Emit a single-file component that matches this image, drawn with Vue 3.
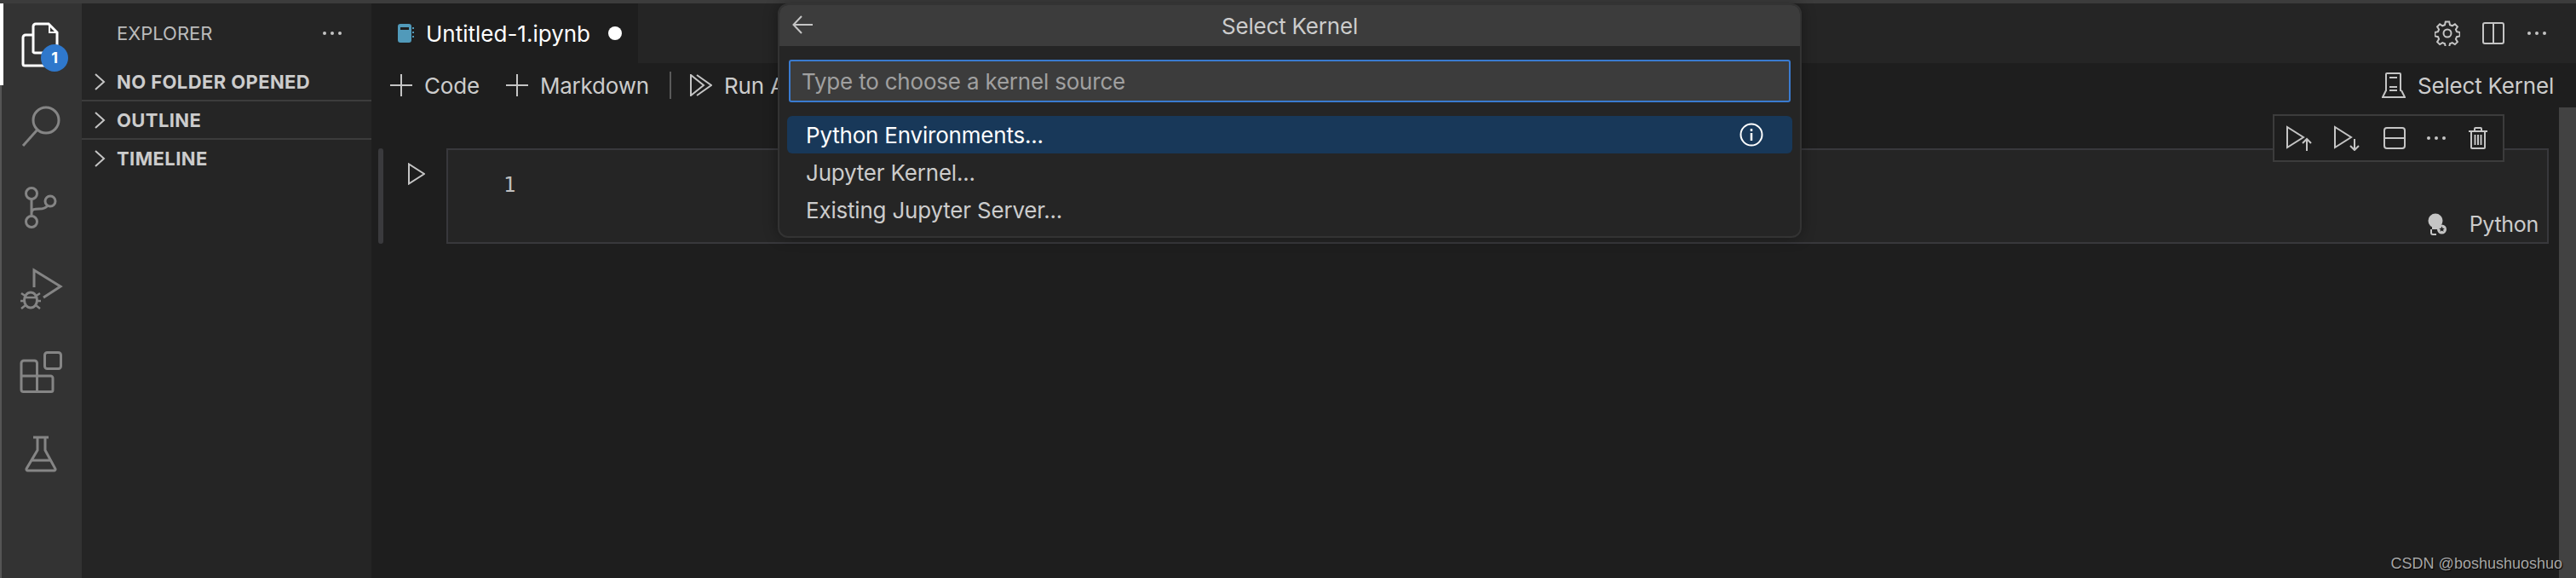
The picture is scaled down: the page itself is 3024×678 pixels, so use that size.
<script setup>
const sections = ['NO FOLDER OPENED', 'OUTLINE', 'TIMELINE']
const kernelSources = ['Python Environments...', 'Jupyter Kernel...', 'Existing Jupyter Server...']
</script>

<template>
  <div class="window">
    <div class="title-strip"></div>
    <div class="main">
      <!-- activity bar -->
      <nav class="activity">
        <div class="activity-item active">
          <svg width="96" height="96" viewBox="0 0 96 96" fill="none" stroke="#fff" stroke-width="3">
            <path d="M39 57V27a3 3 0 0 1 3-3h15l10 10v21a3 3 0 0 1-3 3H42a3 3 0 0 1-3-1Z" />
            <path d="M58 24v10h9" stroke-width="2" />
            <path d="M39 37H30a3 3 0 0 0-3 3v31a2 2 0 0 0 2 2h24" />
          </svg>
          <span class="badge">1</span>
        </div>
        <div class="activity-item">
          <svg width="96" height="96" viewBox="0 0 96 96" fill="none" stroke="#858585" stroke-width="3">
            <circle cx="54" cy="41" r="15" />
            <path d="M44 52 27 71" />
          </svg>
        </div>
        <div class="activity-item">
          <svg width="96" height="96" viewBox="0 0 96 96" fill="none" stroke="#858585" stroke-width="3">
            <circle cx="37" cy="31" r="6.500" />
            <circle cx="37" cy="64" r="6.500" />
            <circle cx="59" cy="40" r="6" />
            <path d="M37 38v19M37 54c0-5 4-5 9-5 5 0 8-1 10-4" />
          </svg>
        </div>
        <div class="activity-item">
          <svg width="96" height="96" viewBox="0 0 96 96" fill="none" stroke="#858585" stroke-width="3">
            <path d="M40 45V25l31 19-20 13" />
            <ellipse cx="36" cy="60" rx="7.500" ry="9" />
            <path d="M29 57h14M25 52l6 4M47 52l-6 4M24 61h5M43 61h5M25 70l5-4M47 70l-5-4" stroke-width="2.500" />
          </svg>
        </div>
        <div class="activity-item">
          <svg width="96" height="96" viewBox="0 0 96 96" fill="none" stroke="#858585" stroke-width="3">
            <rect x="52.500" y="25.500" width="19" height="19" rx="3" />
            <path d="M43.500 53V38a3 3 0 0 0-3-3H28a3 3 0 0 0-3 3v31a2.500 2.500 0 0 0 2.500 2.500H60a2 2 0 0 0 2-2V55.500a2.500 2.500 0 0 0-2.500-2.500H25M43.500 53v18" />
          </svg>
        </div>
        <div class="activity-item">
          <svg width="96" height="96" viewBox="0 0 96 96" fill="none" stroke="#858585" stroke-width="3">
            <path d="M39 29h18M44 29v15L31 66a1.500 1.500 0 0 0 1.500 2h31a1.500 1.500 0 0 0 1.500-2L53 44V29M36 56h24" />
          </svg>
        </div>
      </nav>

      <!-- explorer -->
      <aside class="sidebar">
        <div class="sidebar-head">
          <span>EXPLORER</span>
          <svg class="dots" width="24" height="6" viewBox="0 0 24 6" fill="#c5c5c5">
            <circle cx="3" cy="3" r="2" /><circle cx="12" cy="3" r="2" /><circle cx="21" cy="3" r="2" />
          </svg>
        </div>
        <div v-for="name in sections" :key="name" class="section">
          <svg width="14" height="20" viewBox="0 0 14 20" fill="none" stroke="#c5c5c5" stroke-width="2">
            <path d="M2 1l10 9-10 9" />
          </svg>
          <span>{{ name }}</span>
        </div>
      </aside>

      <!-- editor -->
      <section class="editor">
        <div class="tabs">
          <div class="tab">
            <svg width="20" height="24" viewBox="0 0 20 24">
              <rect x="1" y="1" width="16" height="22" rx="3" fill="#519aba" />
              <rect x="4" y="5" width="10" height="3" fill="#1e1e1e" />
              <path d="M18 5h2v2h-2zM18 10h2v2h-2zM18 15h2v2h-2z" fill="#519aba" />
            </svg>
            <span class="tab-name">Untitled-1.ipynb</span>
            <i class="dirty"></i>
          </div>
          <div class="tab-actions">
            <svg width="30" height="30" viewBox="0 0 30 30" fill="none" stroke="#c5c5c5" stroke-width="2">
              <circle cx="15" cy="15" r="4.500" />
              <path d="M12.800 1.500h4.400l.8 3.700 2.700 1.100 3.200-2 3 3-2 3.200 1.100 2.700 3.700.8v4.400l-3.700.8-1.100 2.700 2 3.200-3 3-3.200-2-2.700 1.100-.8 3.700h-4.400l-.8-3.700-2.700-1.100-3.200 2-3-3 2-3.200-1.100-2.700-3.700-.8v-4.400l3.700-.8 1.100-2.700-2-3.200 3-3 3.200 2 2.700-1.100Z" />
            </svg>
            <svg width="26" height="26" viewBox="0 0 26 26" fill="none" stroke="#c5c5c5" stroke-width="2">
              <rect x="1" y="1" width="24" height="24" rx="2" />
              <path d="M13 1v24" />
            </svg>
            <svg width="24" height="6" viewBox="0 0 24 6" fill="#c5c5c5">
              <circle cx="3" cy="3" r="2" /><circle cx="12" cy="3" r="2" /><circle cx="21" cy="3" r="2" />
            </svg>
          </div>
        </div>

        <div class="toolbar">
          <button class="tool">
            <svg width="26" height="26" viewBox="0 0 26 26" stroke="#c5c5c5" stroke-width="2"><path d="M0 13h26M13 0v26" /></svg>
            <span>Code</span>
          </button>
          <button class="tool">
            <svg width="26" height="26" viewBox="0 0 26 26" stroke="#c5c5c5" stroke-width="2"><path d="M0 13h26M13 0v26" /></svg>
            <span>Markdown</span>
          </button>
          <i class="tool-sep"></i>
          <button class="tool">
            <svg width="26" height="26" viewBox="0 0 26 26" fill="none" stroke="#c5c5c5" stroke-width="2">
              <path d="M1 1v24l15-12Z" /><path d="M8 1l17 12-17 12" />
            </svg>
            <span>Run All</span>
          </button>
          <button class="tool kernel">
            <svg width="28" height="30" viewBox="0 0 28 30" fill="none" stroke="#c5c5c5" stroke-width="2">
              <path d="M5 22V2a1 1 0 0 1 1-1h15a1 1 0 0 1 1 1v20M9 6h9M9 17h9M9 21h9M5 21 1 29h26l-4-8" />
            </svg>
            <span>Select Kernel</span>
          </button>
        </div>

        <div class="cell-row">
          <i class="focus-bar"></i>
          <svg class="cell-run" width="20" height="26" viewBox="0 0 20 26" fill="none" stroke="#c5c5c5" stroke-width="2">
            <path d="M1 1.500v23L19 13Z" />
          </svg>
          <div class="cell">
            <span class="line-no">1</span>
            <div class="lang">
              <svg width="24" height="26" viewBox="0 0 24 26">
                <circle cx="9" cy="9" r="8.500" fill="#c5c5c5" />
                <path d="M5 15h8v4H5z" fill="#c5c5c5" />
                <path d="M4 19v4a2 2 0 0 0 2 2h4" fill="none" stroke="#c5c5c5" stroke-width="2" />
                <circle cx="16.500" cy="19" r="5.500" fill="#c5c5c5" />
                <path d="m16.500 15.500 1 2.300 2.300.2-1.800 1.500.6 2.300-2.100-1.300-2.100 1.300.6-2.300-1.800-1.500 2.300-.2Z" fill="#252525" />
              </svg>
              <span>Python</span>
            </div>
          </div>
        </div>
      </section>
      <div class="scrollbar"></div>
    </div>

    <!-- floats over the notebook -->
    <div class="cell-actions">
      <svg width="30" height="30" viewBox="0 0 30 30" fill="none" stroke="#c5c5c5" stroke-width="2">
        <path d="M1 2v24l19-12Z" /><path d="M24 30V17M19 21l5-5 5 5" />
      </svg>
      <svg width="30" height="30" viewBox="0 0 30 30" fill="none" stroke="#c5c5c5" stroke-width="2">
        <path d="M1 2v24l19-12Z" /><path d="M24 16v13M19 24l5 5 5-5" />
      </svg>
      <svg width="30" height="26" viewBox="-2 0 30 26" fill="none" stroke="#c5c5c5" stroke-width="2">
        <rect x="1" y="1" width="24" height="24" rx="3" /><path d="M1 13h24" />
      </svg>
      <svg class="tight" width="24" height="6" viewBox="0 0 24 6" fill="#c5c5c5">
        <circle cx="3" cy="3" r="2" /><circle cx="12" cy="3" r="2" /><circle cx="21" cy="3" r="2" />
      </svg>
      <svg width="22" height="26" viewBox="0 0 22 26" fill="none" stroke="#c5c5c5" stroke-width="2">
        <path d="M0 5h22M7 5V2a1 1 0 0 1 1-1h6a1 1 0 0 1 1 1v3M3 5v19a1 1 0 0 0 1 1h14a1 1 0 0 0 1-1V5M7.500 9v12M11 9v12M14.500 9v12" />
      </svg>
    </div>

    <div class="quick-input">
      <div class="qi-title">
        <svg width="24" height="22" viewBox="0 0 24 22" fill="none" stroke="#c5c5c5" stroke-width="2">
          <path d="M24 11H2M11 1 1.500 11 11 21" />
        </svg>
        <span>Select Kernel</span>
      </div>
      <div class="qi-input">Type to choose a kernel source</div>
      <ul class="qi-list">
        <li v-for="(item, i) in kernelSources" :key="item" :class="{ selected: i === 0 }">
          <span>{{ item }}</span>
          <svg v-if="i === 0" width="28" height="28" viewBox="0 0 28 28" fill="none" stroke="#fff" stroke-width="2">
            <circle cx="14" cy="14" r="12.500" />
            <path d="M14 12v9M14 7v3" stroke-width="2.500" />
          </svg>
        </li>
      </ul>
    </div>

    <div class="watermark">CSDN @boshushuoshuo</div>
  </div>
</template>

<style>
html,
body {
  margin: 0;
  background: #1e1e1e;
}
</style>

<style scoped>
.window {
  position: relative;
  width: 3024px;
  height: 678px;
  overflow: hidden;
  display: flex;
  flex-direction: column;
  background: #1e1e1e;
  font-family: Inter, "Liberation Sans", sans-serif;
  font-size: 26px;
  letter-spacing: -0.2px;
  color: #cccccc;
}

.title-strip {
  height: 4px;
  background: #3c3c3c;
}

.main {
  flex: 1;
  display: flex;
  min-height: 0;
}

.activity {
  width: 96px;
  background: #333333;
  border-left: 2px solid #555555;
  box-sizing: border-box;
  flex: none;
}

.activity-item {
  position: relative;
  width: 96px;
  height: 96px;
  margin-left: -2px;
}

.activity-item svg {
  display: block;
}

.activity-item.active {
  border-left: 4px solid #ffffff;
  box-sizing: border-box;
}

.activity-item.active svg {
  margin-left: -4px;
}

.badge {
  position: absolute;
  left: 44px;
  top: 48px;
  width: 32px;
  height: 32px;
  border-radius: 50%;
  background: #2f78cc;
  color: #fff;
  font-size: 18px;
  font-weight: 700;
  line-height: 32px;
  text-align: center;
}

.sidebar {
  width: 340px;
  flex: none;
  background: #252525;
  border-right: 8px solid #1e1e1e;
  box-sizing: content-box;
}

.sidebar-head {
  height: 70px;
  box-sizing: border-box;
  padding: 0 34px 0 41px;
  display: flex;
  align-items: center;
  justify-content: space-between;
  font-size: 22px;
  letter-spacing: 0;
  color: #bbbbbb;
}

.section {
  height: 43px;
  border-bottom: 2px solid #3c3c3c;
  display: flex;
  align-items: center;
  gap: 13px;
  padding-left: 14px;
  font-size: 22px;
  font-weight: 700;
  letter-spacing: 0.4px;
  color: #cccccc;
}

.section:last-child {
  border-bottom: 0;
}

.editor {
  flex: 1;
  min-width: 0;
  display: flex;
  flex-direction: column;
}

.tabs {
  height: 70px;
  display: flex;
  background: #252525;
}

.tab {
  width: 305px;
  background: #1e1e1e;
  display: flex;
  align-items: center;
  padding-left: 22px;
  box-sizing: border-box;
}

.tab-name {
  margin-left: 14px;
  letter-spacing: 0;
  color: #ffffff;
}

.dirty {
  width: 16px;
  height: 16px;
  border-radius: 50%;
  background: #fff;
  margin-left: 21px;
}

.tab-actions {
  margin-left: auto;
  display: flex;
  align-items: center;
  gap: 26px;
  padding-right: 34px;
}

.toolbar {
  height: 52px;
  display: flex;
  align-items: center;
  padding: 0 26px 0 14px;
  gap: 31px;
}

.tool {
  display: flex;
  align-items: center;
  gap: 14px;
  padding: 0;
  border: 0;
  background: none;
  color: #cccccc;
  font: inherit;
  letter-spacing: inherit;
  white-space: nowrap;
}

.tool-sep {
  width: 2px;
  height: 32px;
  margin: 0 -9px 0 -7px;
  background: #5a5a5a;
}

.kernel {
  margin-left: auto;
}

.cell-row {
  display: flex;
  margin-top: 48px;
  padding-right: 32px;
}

.focus-bar {
  width: 6px;
  height: 112px;
  border-radius: 3px;
  background: #3a3a3d;
}

.cell-run {
  margin: 17px 25px 0 29px;
}

.cell {
  flex: 1;
  height: 112px;
  box-sizing: border-box;
  border: 2px solid #38383c;
  background: #252525;
  position: relative;
  display: flex;
  justify-content: space-between;
}

.line-no {
  margin: 26px 0 0 65px;
  font-family: "DejaVu Sans Mono", monospace;
  font-size: 24px;
  line-height: 30px;
  color: #c0c0c0;
}

.lang {
  align-self: flex-end;
  display: flex;
  align-items: center;
  gap: 25px;
  margin: 0 10px 7px 0;
  height: 28px;
  font-size: 25px;
  letter-spacing: -0.3px;
}

.scrollbar {
  position: absolute;
  left: 3004px;
  top: 126px;
  width: 20px;
  bottom: 0;
  background: #424242;
}

.cell-actions {
  position: absolute;
  left: 2668px;
  top: 134px;
  width: 272px;
  height: 56px;
  box-sizing: border-box;
  border: 2px solid #3c3c3c;
  background: #1e1e1e;
  display: flex;
  align-items: center;
  gap: 26px;
  padding-left: 14px;
}

.cell-actions .tight {
  margin-left: -4px;
}

.quick-input {
  position: absolute;
  left: 913px;
  top: 4px;
  width: 1202px;
  height: 275px;
  box-sizing: border-box;
  border: 2px solid #333333;
  border-radius: 12px;
  background: #252525;
  overflow: hidden;
  box-shadow: 0 0 16px rgba(0, 0, 0, 0.35);
}

.qi-title {
  position: relative;
  height: 48px;
  background: #3c3c3c;
  display: flex;
  align-items: center;
  justify-content: center;
  color: #cccccc;
}

.qi-title svg {
  position: absolute;
  left: 15px;
  top: 12px;
}

.qi-input {
  margin: 16px 11px 16px 11px;
  height: 50px;
  box-sizing: border-box;
  border: 2px solid #3a7bd0;
  border-radius: 3px;
  background: #3c3c3c;
  padding-left: 13px;
  line-height: 48px;
  color: #a0a0a0;
}

.qi-list {
  list-style: none;
  margin: 0 9px;
  padding: 0;
}

.qi-list li {
  height: 44px;
  display: flex;
  align-items: center;
  justify-content: space-between;
  padding: 0 34px 0 22px;
  border-radius: 6px;
  color: #cccccc;
}

.qi-list li.selected {
  background: #183859;
  color: #ffffff;
}

.watermark {
  position: absolute;
  right: 16px;
  bottom: 6px;
  font-family: "Liberation Sans", sans-serif;
  font-size: 18px;
  letter-spacing: 0;
  color: #a6a6a6;
  text-shadow: 1px 1px 1px #000;
}
</style>
